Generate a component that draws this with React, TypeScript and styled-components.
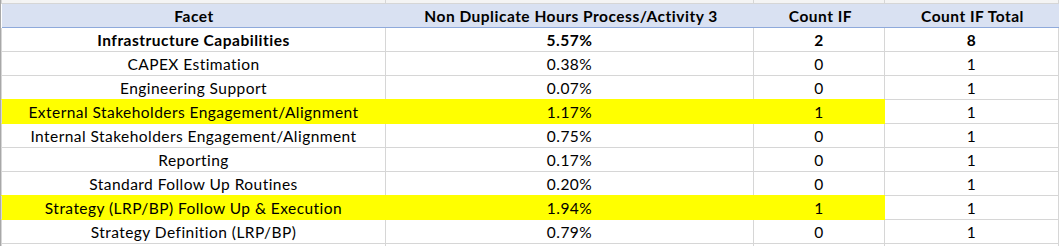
import * as React from "react";
import styled, { createGlobalStyle } from "styled-components";

type Row = {
  facet: string;
  hours: string;
  count: string;
  total: string;
  bold?: boolean;
  highlight?: boolean;
};

const rows: Row[] = [
  { facet: "Infrastructure Capabilities", hours: "5.57%", count: "2", total: "8", bold: true },
  { facet: "CAPEX Estimation", hours: "0.38%", count: "0", total: "1" },
  { facet: "Engineering Support", hours: "0.07%", count: "0", total: "1" },
  { facet: "External Stakeholders Engagement/Alignment", hours: "1.17%", count: "1", total: "1", highlight: true },
  { facet: "Internal Stakeholders Engagement/Alignment", hours: "0.75%", count: "0", total: "1" },
  { facet: "Reporting", hours: "0.17%", count: "0", total: "1" },
  { facet: "Standard Follow Up Routines", hours: "0.20%", count: "0", total: "1" },
  { facet: "Strategy (LRP/BP) Follow Up & Execution", hours: "1.94%", count: "1", total: "1", highlight: true },
  { facet: "Strategy Definition (LRP/BP)", hours: "0.79%", count: "0", total: "1" },
];

const GRID = "#d6d6d6";
const YELLOW = "#ffff00";

const GlobalStyle = createGlobalStyle`
  body {
    margin: 0;
    background: #fff;
    font-family: Lato, "Liberation Sans", sans-serif;
    color: #000;
  }
`;

const App: React.FC = () => {
  return (
    <>
      <GlobalStyle />
      <Sheet>
        <Line>
          <Stub />
          <Stub />
          <Stub />
          <Stub />
        </Line>
        <HeaderRow>
          <HeadCell>Facet</HeadCell>
          <HeadCell>Non Duplicate Hours Process/Activity 3</HeadCell>
          <HeadCell>Count IF</HeadCell>
          <HeadCell $last>Count IF Total</HeadCell>
        </HeaderRow>
        {rows.map((r) => (
          <Line key={r.facet}>
            <Cell $bold={r.bold} $fill={r.highlight}>{r.facet}</Cell>
            <Cell $bold={r.bold} $fill={r.highlight}>{r.hours}</Cell>
            <Cell $bold={r.bold} $fill={r.highlight}>{r.count}</Cell>
            <Cell $bold={r.bold}>{r.total}</Cell>
          </Line>
        ))}
        <Line>
          <Stub $tail />
          <Stub $tail />
          <Stub $tail />
          <Stub $tail />
        </Line>
      </Sheet>
    </>
  );
};

const Sheet = styled.div`
  width: 1058px;
  height: 246px;
  overflow: hidden;
  border-left: 1px solid #a8a8a8;
  display: flex;
  flex-direction: column;
`;

const Line = styled.div`
  display: grid;
  grid-template-columns: 385px 368px 131px 174px;
`;

const Stub = styled.div<{ $tail?: boolean }>`
  height: 3px;
  background: ${(p) => (p.$tail ? "#fff" : "#f4f4f4")};
  border-right: 1px solid ${GRID};
  border-bottom: ${(p) => (p.$tail ? "none" : `1px solid ${GRID}`)};
  &:first-child {
    border-left: 1px solid ${GRID};
  }
`;

const HeaderRow = styled.div`
  display: grid;
  grid-template-columns: 385px 368px 131px 174px;
  background: #d9e1f2;
  border-bottom: 1px solid #8ea9db;
  margin-left: 1px;
`;

const HeadCell = styled.div<{ $last?: boolean }>`
  height: 23px;
  padding-top: 1px;
  box-sizing: border-box;
  line-height: 23px;
  font-size: 15.5px;
  letter-spacing: 0.5px;
  font-weight: 700;
  text-align: center;
  white-space: nowrap;
  border-right: ${(p) => (p.$last ? `1px solid ${GRID}` : "none")};
  &:first-child {
    margin-left: -1px;
  }
`;

const Cell = styled.div<{ $bold?: boolean; $fill?: boolean }>`
  height: 24px;
  padding-top: 1px;
  box-sizing: border-box;
  line-height: 23px;
  font-size: 15.5px;
  letter-spacing: ${(p) => (p.$bold ? "0.5px" : "0.45px")};
  font-weight: ${(p) => (p.$bold ? 700 : 400)};
  text-align: center;
  white-space: nowrap;
  background: ${(p) => (p.$fill ? YELLOW : "#fff")};
  border-right: 1px solid ${(p) => (p.$fill ? YELLOW : GRID)};
  border-bottom: 1px solid ${(p) => (p.$fill ? YELLOW : GRID)};
  box-shadow: ${(p) => (p.$fill ? `0 -1px 0 ${YELLOW}` : "none")};
  &:first-child {
    border-left: 1px solid ${GRID};
  }
`;

export default App;
